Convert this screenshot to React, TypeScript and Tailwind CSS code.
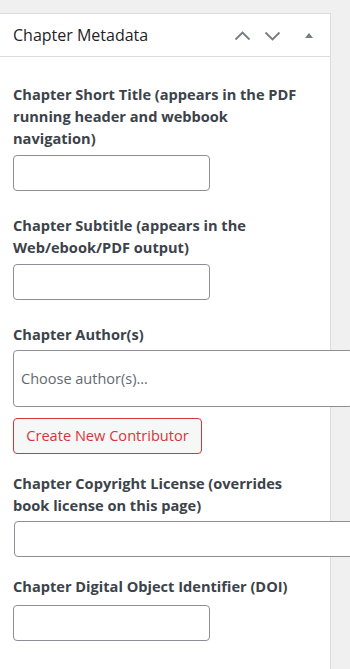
const font = { fontFamily: '"Open Sans", "Noto Sans", sans-serif' };

function Label({ children }: { children: React.ReactNode }) {
  return (
    <label className="block max-w-[292px] text-[14.6px] leading-[22px] font-bold text-[#3c434a]">
      {children}
    </label>
  );
}

function TextInput({ wide = false }: { wide?: boolean }) {
  return (
    <input
      type="text"
      className={
        wide
          ? "block h-[36px] w-[340px] rounded-[4px] border border-[#8c8f94] bg-white"
          : "block h-[36px] w-[197px] rounded-[4px] border border-[#8c8f94] bg-white"
      }
    />
  );
}

export default function App() {
  return (
    <div className="min-h-[669px] w-[350px] overflow-hidden bg-[#f0f0f1] pt-[13px]" style={font}>
      <div className="w-[331px] min-h-[656px] border-t border-r border-[#dcdcde] bg-white">
        <div className="flex h-[43px] items-center border-b border-[#dcdcde] pl-[13px]">
          <h2 className="flex-1 text-[16px] text-[#1d2327]">Chapter Metadata</h2>
          {/* move up / move down / toggle */}
          <svg width="17" height="11" viewBox="0 0 17 11" className="mr-[13px]">
            <polyline points="1.5,9.5 8.5,2.5 15.5,9.5" fill="none" stroke="#787c82" strokeWidth="1.8" />
          </svg>
          <svg width="17" height="11" viewBox="0 0 17 11" className="mr-[23px] mt-[2px]">
            <polyline points="1.5,1.5 8.5,8.5 15.5,1.5" fill="none" stroke="#787c82" strokeWidth="1.8" />
          </svg>
          <svg width="10" height="7" viewBox="0 0 10 7" className="mr-[16px]">
            <polygon points="5,1 9,6 1,6" fill="#787c82" />
          </svg>
        </div>
        <div className="flex flex-col pl-[13px] pt-[26px]">
          <Label>Chapter Short Title (appears in the PDF running header and webbook navigation)</Label>
          <div className="mt-[6px]">
            <TextInput />
          </div>
          <div className="mt-[23px]">
            <Label>Chapter Subtitle (appears in the Web/ebook/PDF output)</Label>
          </div>
          <div className="mt-[6px]">
            <TextInput />
          </div>
          <div className="mt-[23px]">
            <Label>Chapter Author(s)</Label>
          </div>
          <div className="mt-[5px] flex h-[57px] w-[340px] items-center rounded-[4px] border border-[#8c8f94] bg-white pl-[7px] text-[14.5px] text-[#646970]">
            Choose author(s)...
          </div>
          <button
            type="button"
            className="mt-[11px] flex h-[36px] w-[189px] items-center justify-center rounded-[4px] border border-[#d63638] bg-[#f6f7f7] text-[14.6px] text-[#d63638]"
          >
            Create New Contributor
          </button>
          <div className="mt-[18px]">
            <Label>Chapter Copyright License (overrides book license on this page)</Label>
          </div>
          <div className="mt-[5px] pl-[1px]">
            <TextInput wide />
          </div>
          <div className="mt-[18px]">
            <Label>Chapter Digital Object Identifier (DOI)</Label>
          </div>
          <div className="mt-[8px]">
            <TextInput />
          </div>
        </div>
      </div>
    </div>
  );
}
